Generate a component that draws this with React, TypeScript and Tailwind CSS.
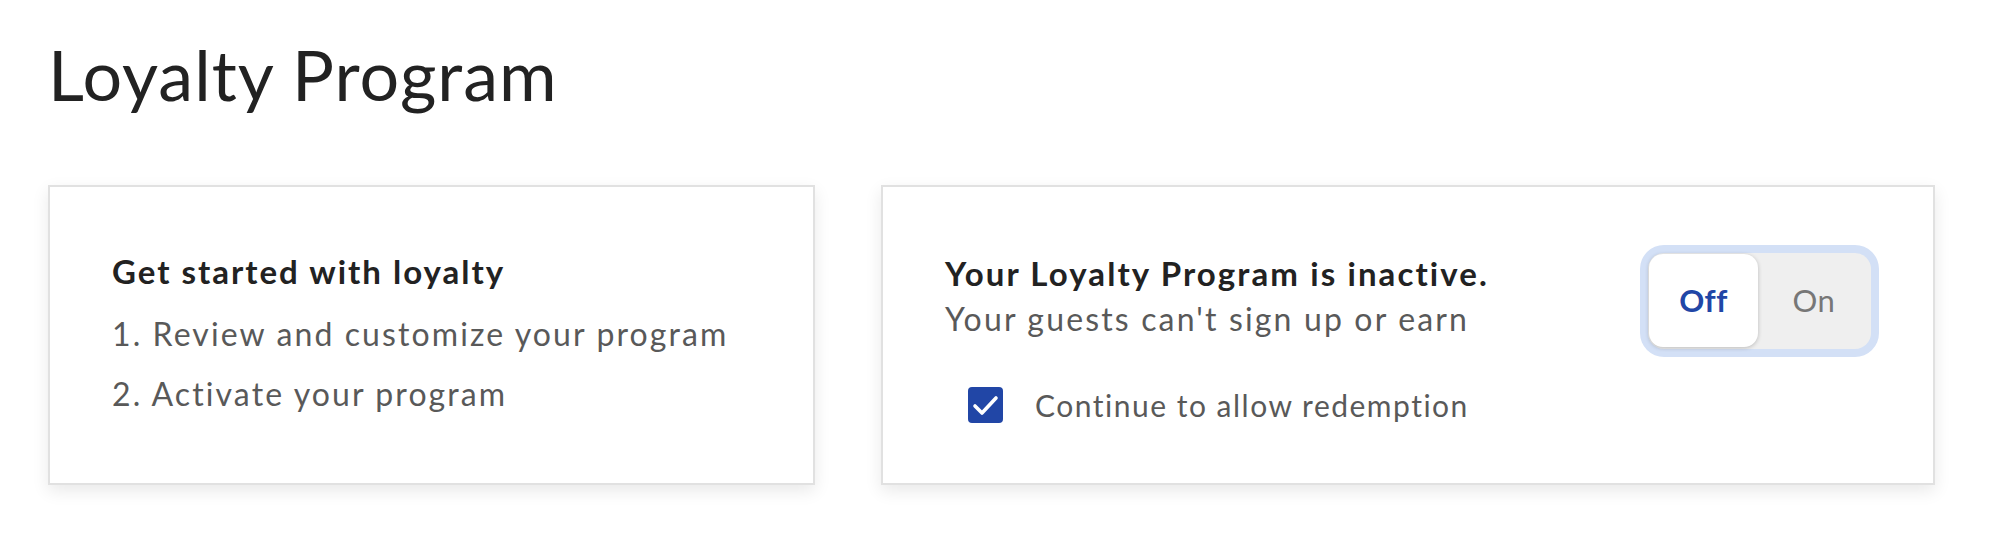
import { useState } from 'react'

export default function App() {
  const [active, setActive] = useState(false)
  const [allowRedemption, setAllowRedemption] = useState(true)

  return (
    <div className="min-h-screen bg-white px-12 pt-[34px] font-['Lato',sans-serif]">
      {/* Header */}
      <h1 className="text-[70px] leading-[80px] font-normal tracking-[1px] text-[#222222]">Loyalty Program</h1>

      <div className="mt-[71px] flex gap-[66px]">
        {/* Get started card */}
        <div className="w-[767px] h-[300px] bg-white border-2 border-[#e1e1e1] shadow-[0_6px_16px_rgba(0,0,0,0.09)] flex flex-col justify-center pl-[62px] pt-[2px]">
          <h2 className="text-[33px] leading-[44px] font-bold tracking-[2px] text-[#222222]">Get started with loyalty</h2>
          <p className="mt-[11px] text-[32px] leading-[60px] text-[#595959] tracking-[2.1px]">1. Review and customize your program</p>
          <p className="text-[32px] leading-[60px] text-[#595959] tracking-[2.1px]">2. Activate your program</p>
        </div>

        {/* Status card */}
        <div className="w-[1054px] h-[300px] bg-white border-2 border-[#e1e1e1] shadow-[0_6px_16px_rgba(0,0,0,0.09)] flex flex-col justify-center px-[62px] pt-[6px]">
          <div className="flex items-start justify-between">
            <div>
              <h2 className="text-[33px] leading-[40px] font-bold tracking-[2.1px] text-[#222222]">Your Loyalty Program is inactive.</h2>
              <p className="mt-[6px] text-[32px] leading-[40px] text-[#595959] tracking-[2.15px]">Your guests can't sign up or earn</p>
            </div>

            {/* Off / On toggle */}
            <div className="flex w-[223px] h-[96px] rounded-[16px] bg-[#efefef] shadow-[0_0_0_8px_#d3e0f6]">
              <button
                onClick={() => setActive(false)}
                className={`w-[109px] h-[93px] mt-px ml-px rounded-[14px] text-[31px] tracking-[0.5px] ${!active ? 'bg-white shadow-[0_1px_4px_rgba(0,0,0,0.22)] font-bold text-[#2146a6]' : 'text-[#777777]'}`}
              >
                Off
              </button>
              <button
                onClick={() => setActive(true)}
                className={`flex-1 h-[93px] mt-px mr-px rounded-[14px] text-[31px] tracking-[0.5px] ${active ? 'bg-white shadow-[0_1px_4px_rgba(0,0,0,0.22)] font-bold text-[#2146a6]' : 'text-[#777777]'}`}
              >
                On
              </button>
            </div>
          </div>

          {/* Redemption checkbox */}
          <label className="mt-[38px] ml-[23px] flex items-center gap-[32px] cursor-pointer">
            <span
              onClick={() => setAllowRedemption(!allowRedemption)}
              className={`w-[35px] h-[36px] rounded-[4px] flex items-center justify-center ${allowRedemption ? 'bg-[#2146a6]' : 'bg-white border-2 border-[#999999]'}`}
            >
              {allowRedemption && (
                <svg width="27" height="23" viewBox="0 0 27 23" fill="none">
                  <path d="M3 12l7 7L24 4" stroke="white" strokeWidth="3.6" strokeLinecap="round" strokeLinejoin="round" />
                </svg>
              )}
            </span>
            <span className="text-[30px] leading-[36px] text-[#595959] tracking-[1.5px]">Continue to allow redemption</span>
          </label>
        </div>
      </div>
    </div>
  )
}
